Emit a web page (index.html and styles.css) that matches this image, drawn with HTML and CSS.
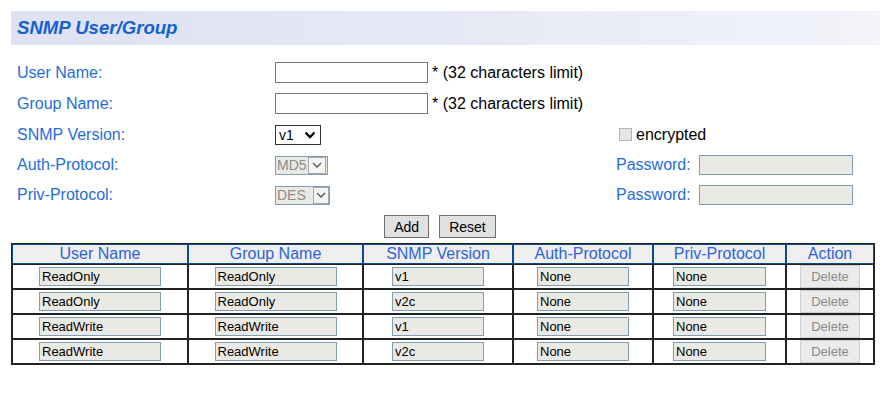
FILE: index.html
```html
<!DOCTYPE html>
<html>
<head>
<meta charset="utf-8">
<title>SNMP User/Group</title>
<link rel="stylesheet" href="styles.css">
</head>
<body>
<div class="page">
  <div class="titlebar"><h1 class="title">SNMP User/Group</h1></div>

  <div class="form">
    <div class="row r31">
      <label class="lbl">User Name:</label>
      <div class="fld"><input class="txt" type="text"><span class="note">* (32 characters limit)</span></div>
      <div class="side"></div>
    </div>
    <div class="row r31">
      <label class="lbl">Group Name:</label>
      <div class="fld"><input class="txt" type="text"><span class="note">* (32 characters limit)</span></div>
      <div class="side"></div>
    </div>
    <div class="row r31">
      <label class="lbl">SNMP Version:</label>
      <div class="fld">
        <span class="sel sel-v"><span class="sel-text">v1</span><svg class="chev" width="12" height="8" viewBox="0 0 12 8"><path d="M1.5 1.5 L6 6 L10.5 1.5" fill="none" stroke="#000" stroke-width="2.3"/></svg></span>
      </div>
      <div class="side"><span class="chk"></span><span class="chk-txt">encrypted</span></div>
    </div>
    <div class="row r30">
      <label class="lbl">Auth-Protocol:</label>
      <div class="fld">
        <span class="sel sel-dis sel-md5"><span class="sel-text">MD5</span><span class="arrowbox"><svg width="10" height="6" viewBox="0 0 10 6"><path d="M1 1 L5 5 L9 1" fill="none" stroke="#555" stroke-width="1.3"/></svg></span></span>
      </div>
      <div class="side"><span class="pw-lbl">Password:</span><input class="pw" type="password" disabled></div>
    </div>
    <div class="row r30">
      <label class="lbl">Priv-Protocol:</label>
      <div class="fld">
        <span class="sel sel-dis sel-des"><span class="sel-text">DES</span><span class="arrowbox"><svg width="10" height="6" viewBox="0 0 10 6"><path d="M1 1 L5 5 L9 1" fill="none" stroke="#555" stroke-width="1.3"/></svg></span></span>
      </div>
      <div class="side"><span class="pw-lbl">Password:</span><input class="pw" type="password" disabled></div>
    </div>
  </div>

  <div class="actions">
    <button class="btn" type="button">Add</button>
    <button class="btn" type="button">Reset</button>
  </div>

  <table class="grid">
    <colgroup>
      <col class="c1"><col class="c2"><col class="c3"><col class="c4"><col class="c5"><col class="c6">
    </colgroup>
    <thead>
      <tr><th>User Name</th><th>Group Name</th><th>SNMP Version</th><th>Auth-Protocol</th><th>Priv-Protocol</th><th>Action</th></tr>
    </thead>
    <tbody>
      <tr>
        <td><input class="cell w122" value="ReadOnly" readonly></td>
        <td><input class="cell w122" value="ReadOnly" readonly></td>
        <td><input class="cell w92" value="v1" readonly></td>
        <td><input class="cell w92" value="None" readonly></td>
        <td><input class="cell w93" value="None" readonly></td>
        <td><button class="del" type="button" disabled>Delete</button></td>
      </tr>
      <tr>
        <td><input class="cell w122" value="ReadOnly" readonly></td>
        <td><input class="cell w122" value="ReadOnly" readonly></td>
        <td><input class="cell w92" value="v2c" readonly></td>
        <td><input class="cell w92" value="None" readonly></td>
        <td><input class="cell w93" value="None" readonly></td>
        <td><button class="del" type="button" disabled>Delete</button></td>
      </tr>
      <tr>
        <td><input class="cell w122" value="ReadWrite" readonly></td>
        <td><input class="cell w122" value="ReadWrite" readonly></td>
        <td><input class="cell w92" value="v1" readonly></td>
        <td><input class="cell w92" value="None" readonly></td>
        <td><input class="cell w93" value="None" readonly></td>
        <td><button class="del" type="button" disabled>Delete</button></td>
      </tr>
      <tr>
        <td><input class="cell w122" value="ReadWrite" readonly></td>
        <td><input class="cell w122" value="ReadWrite" readonly></td>
        <td><input class="cell w92" value="v2c" readonly></td>
        <td><input class="cell w92" value="None" readonly></td>
        <td><input class="cell w93" value="None" readonly></td>
        <td><button class="del" type="button" disabled>Delete</button></td>
      </tr>
    </tbody>
  </table>
</div>
</body>
</html>
```

FILE: styles.css
```css
* { box-sizing: border-box; }
html, body { margin: 0; padding: 0; background: #fff; }
body { font-family: "Liberation Sans", Arial, sans-serif; color: #000; }

.page { padding: 11px 10px 0 11px; width: 890px; }

.titlebar {
  height: 34px;
  background: linear-gradient(to right, #dde1f1 0%, #e6e9f5 50%, #f3f4fa 100%);
  display: flex;
  align-items: center;
  padding-left: 6px;
}
.title {
  margin: 0;
  font-size: 18.6px;
  font-weight: bold;
  font-style: italic;
  color: #1461cf;
}

.form { margin-top: 12px; padding-left: 6px; }
.row { display: grid; grid-template-columns: 258px 341px 1fr; align-items: center; }
.r31 { height: 31px; }
.r30 { height: 30px; }

.lbl { font-size: 16px; color: #1e6ddc; }
.fld { display: flex; align-items: center; }
.side { display: flex; align-items: center; }

.txt {
  width: 153px; height: 21px;
  border: 1px solid #767676;
  background: #fff;
  padding: 0 2px;
  font: 13px "Liberation Sans", Arial, sans-serif;
}
.note { font-size: 16px; margin-left: 4px; color: #000; }

.sel {
  display: inline-flex; align-items: center;
  height: 20px;
  font-size: 14px;
}
.sel-v {
  width: 46px; height: 20px;
  border: 1px solid #333;
  background: #fff;
  padding-left: 3px;
  justify-content: space-between;
  padding-right: 4px;
}
.sel-v .sel-text { color: #000; }
.sel-dis {
  border: 1px solid #7f9db9;
  background: #ebe9e3;
  height: 19px;
  padding-left: 1px;
}
.sel-dis .sel-text { color: #8d8d8d; }
.sel-md5 { width: 53px; }
.sel-des { width: 55px; }
.sel-des .sel-text { margin-right: 7px; }
.arrowbox {
  margin-left: auto;
  width: 18px; height: 17px;
  border: 1px solid #a7a7a7;
  background: #f4f4f4;
  display: flex; align-items: center; justify-content: center;
}
.sel-md5 .arrowbox { margin-left: 1px; }

.chk {
  display: inline-block;
  width: 13px; height: 13px;
  margin-left: 3px;
  border: 1px solid #b5b5b5;
  background: #e6e6e6;
}
.chk-txt { font-size: 16px; margin-left: 4px; color: #000; }

.pw-lbl { font-size: 16px; color: #1e6ddc; width: 83px; }
.pw {
  width: 154px; height: 20px;
  border: 1px solid #7f9db9;
  background: #ebe9e3;
}

.actions {
  display: flex; justify-content: center; gap: 10px;
  margin-top: 5px;
  padding-right: 11px;
}
.btn {
  height: 23px;
  padding: 0 9px;
  border: 1px solid #707070;
  background: #e1e1e1;
  font: 14px "Liberation Sans", Arial, sans-serif;
  color: #000;
  border-radius: 0;
}

.grid {
  margin-top: 5px;
  width: 864px;
  table-layout: fixed;
  border-collapse: separate;
  border-spacing: 0;
  border: 1px solid #222;
}
.c1 { width: 176px; }
.c2 { width: 175px; }
.c3 { width: 150px; }
.c4 { width: 140px; }
.c5 { width: 133px; }
.c6 { width: 88px; }

.grid th {
  height: 20px;
  padding: 0;
  border: 1px solid #0d4a8e;
  background: #efefef;
  font-size: 16px;
  font-weight: normal;
  line-height: 18px;
  color: #2d63d8;
  text-align: center;
}
.grid td {
  height: 25px;
  padding: 0;
  border: 1px solid #222;
  text-align: center;
  vertical-align: middle;
}
.cell {
  height: 19px;
  border: 1px solid #7f9db9;
  background: #ebe9e3;
  padding: 0 2px;
  font: 13px "Liberation Sans", Arial, sans-serif;
  color: #000;
  vertical-align: middle;
}
.w122 { width: 122px; }
.w92 { width: 92px; }
.w93 { width: 93px; }

.del {
  width: 60px; height: 23px;
  border: 1px solid #cfcfcf;
  background: #ebebeb;
  color: #8a8a8a;
  font: 13px "Liberation Sans", Arial, sans-serif;
  padding: 0;
  border-radius: 0;
  vertical-align: middle;
}
```
